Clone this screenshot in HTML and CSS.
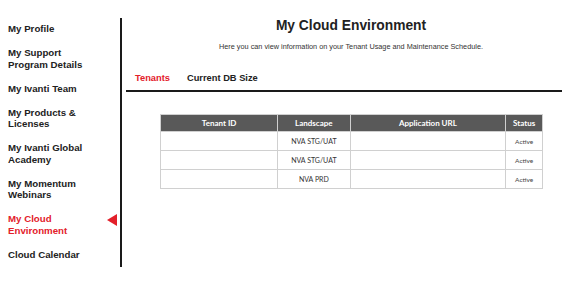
FILE: index.html
```
<!DOCTYPE html>
<html>
<head>
<meta charset="utf-8">
<link rel="stylesheet" href="styles.css">
</head>
<body>
<div class="page">
  <nav class="sidebar">
    <a class="item">My Profile</a>
    <a class="item">My Support<br>Program Details</a>
    <a class="item">My Ivanti Team</a>
    <a class="item">My Products &amp;<br>Licenses</a>
    <a class="item">My Ivanti Global<br>Academy</a>
    <a class="item">My Momentum<br>Webinars</a>
    <a class="item active">My Cloud<br>Environment<span class="pointer"></span></a>
    <a class="item">Cloud Calendar</a>
  </nav>
  <main class="main">
    <header class="heading">
      <h1 class="title">My Cloud Environment</h1>
      <p class="subtitle">Here you can view information on your Tenant Usage and Maintenance Schedule.</p>
    </header>
    <div class="tabs">
      <span class="tab tab-active">Tenants</span>
      <span class="tab">Current DB Size</span>
    </div>
    <table class="tenants">
      <thead>
        <tr><th class="c1">Tenant ID</th><th class="c2">Landscape</th><th class="c3">Application URL</th><th class="c4">Status</th></tr>
      </thead>
      <tbody>
        <tr><td></td><td>NVA STG/UAT</td><td></td><td class="status">Active</td></tr>
        <tr><td></td><td>NVA STG/UAT</td><td></td><td class="status">Active</td></tr>
        <tr><td></td><td>NVA PRD</td><td></td><td class="status">Active</td></tr>
      </tbody>
    </table>
  </main>
</div>
</body>
</html>
```
FILE: styles.css
```
html, body { margin: 0; padding: 0; background: #fff; }
body { font-family: "Liberation Sans", Arial, sans-serif; color: #222; }
.page { display: flex; align-items: flex-start; padding-top: 18px; }
.sidebar {
  width: 112px;
  padding: 5px 0 0 8px;
  height: 244px;
  border-right: 2px solid #1a1a1a;
  display: flex;
  flex-direction: column;
  gap: 12.5px;
}
.item {
  position: relative;
  font-size: 9.7px;
  font-weight: bold;
  line-height: 11.5px;
  color: #222;
  display: block;
}
.item.active { color: #e3202a; }
.pointer {
  position: absolute;
  right: 3px;
  top: 1px;
  width: 0; height: 0;
  border-top: 6px solid transparent;
  border-bottom: 6px solid transparent;
  border-right: 10px solid #e3202a;
}
.main {
  width: 436px;
  margin-left: 4px;
}
.heading { padding-left: 14px; }
.title {
  margin: 0;
  text-align: center;
  font-size: 13.8px;
  line-height: 16px;
  font-weight: bold;
  color: #222;
}
.subtitle {
  margin: 8px 0 0;
  text-align: center;
  font-size: 7.3px;
  line-height: 10px;
  color: #333;
}
.tabs {
  margin-top: 20px;
  padding: 0 0 6px 9px;
  border-bottom: 2px solid #1a1a1a;
  display: flex;
  gap: 17px;
}
.tab {
  font-size: 9.3px;
  font-weight: bold;
  line-height: 12px;
  color: #222;
}
.tab-active { color: #e3202a; }
.tenants {
  margin: 22px 0 0 34px;
  border-collapse: collapse;
  font-family: Lato, "Open Sans", sans-serif;
  width: 383px;
}
.tenants th {
  background: #595959;
  color: #fff;
  font-size: 8px;
  font-weight: bold;
  height: 16px;
  padding: 0;
  border: 1px solid #d0d0d0;
  text-align: center;
}
.tenants td {
  font-size: 7px;
  color: #333;
  height: 18px;
  padding: 0;
  border: 1px solid #d0d0d0;
  text-align: center;
}
.tenants td.status { font-size: 6.5px; color: #444; }
.c1 { width: 118px; }
.c2 { width: 72px; }
.c3 { width: 157px; }
.c4 { width: 36px; }
```
